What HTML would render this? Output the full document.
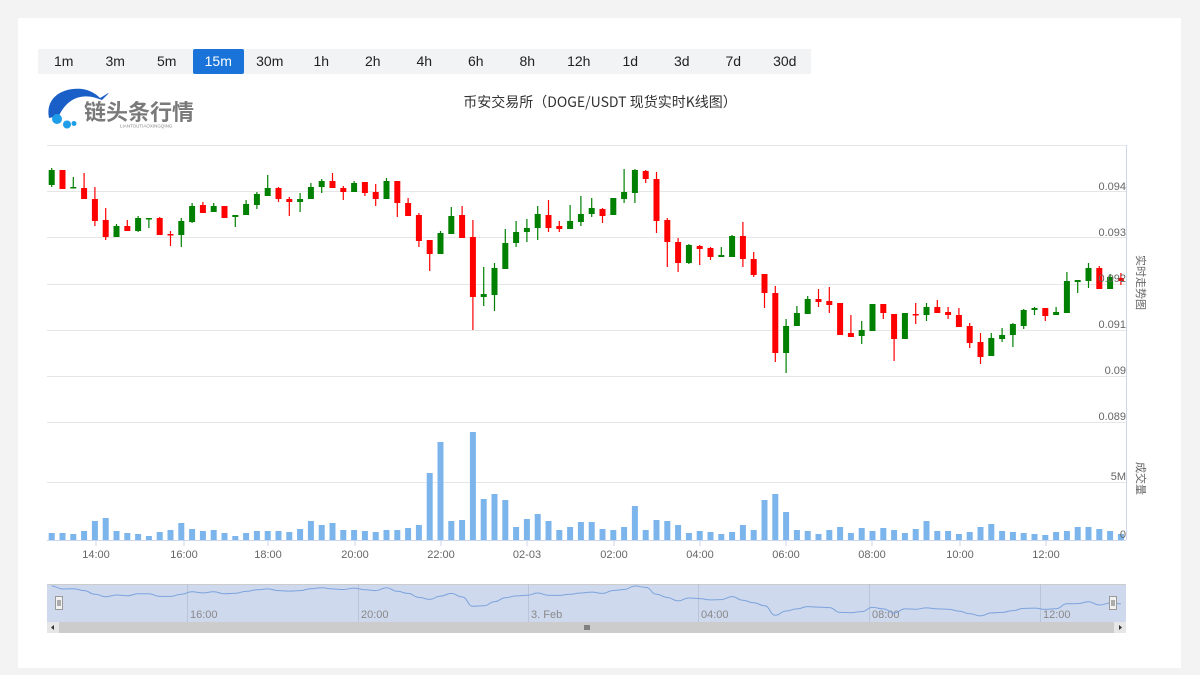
<!DOCTYPE html>
<html><head><meta charset="utf-8">
<style>
body{margin:0;width:1200px;height:675px;background:#f3f3f3;font-family:"Liberation Sans","Noto Sans CJK SC",sans-serif;overflow:hidden}
#card{position:absolute;left:18px;top:18px;width:1163px;height:650px;background:#fff}
.btns{position:absolute;left:38px;top:49px;height:25px;display:flex;background:#f2f3f5}
.btns div{width:51.5px;text-align:center;line-height:25px;font-size:14px;color:#222}
.btns .a{background:#1a73d9;color:#fff;border-radius:2px}
svg{position:absolute;left:0;top:0}
</style></head><body>
<div id="card"></div>
<div class="btns"><div>1m</div><div>3m</div><div>5m</div><div class="a">15m</div><div>30m</div><div>1h</div><div>2h</div><div>4h</div><div>6h</div><div>8h</div><div>12h</div><div>1d</div><div>3d</div><div>7d</div><div>30d</div></div>
<svg id="s" width="1200" height="675" xmlns="http://www.w3.org/2000/svg" font-family="Liberation Sans, Noto Sans CJK SC, sans-serif">
<path d="M49 118 C45 98 62 87 82 89 C90 90 96 94 100 98 C104 96 106 94 109 93 L102 100 L96 98 C80 93 66 100 59 116 Z" fill="#1a5fc8"/>
<circle cx="57" cy="119" r="5" fill="#1e9ee8"/><circle cx="67" cy="124.5" r="4" fill="#1e9ee8"/><circle cx="74" cy="123.5" r="2.5" fill="#1e9ee8"/>
<text x="84" y="120" font-size="22" font-weight="bold" fill="#7a7a7a" font-family="Noto Sans CJK SC, sans-serif">链头条行情</text>
<text x="120" y="127.5" font-size="4.5" fill="#888">LIANTOUTIAOXINGQING</text>
<text x="600" y="107" font-size="14" fill="#333" text-anchor="middle" font-family="Noto Sans CJK SC, sans-serif">币安交易所（DOGE/USDT 现货实时K线图）</text>
<g id="grid" stroke="#e6e6e6" stroke-width="1"></g>
<line x1="1126.5" y1="145" x2="1126.5" y2="540" stroke="#ccd6eb"/>
<line x1="47" y1="540.5" x2="1126" y2="540.5" stroke="#ccd6eb"/>
<g id="c"></g>
<g font-size="11" fill="#666" text-anchor="end">
<text x="1126" y="190">0.094</text><text x="1126" y="236">0.093</text><text x="1126" y="282">0.092</text><text x="1126" y="328">0.091</text><text x="1126" y="374">0.09</text><text x="1126" y="420">0.089</text><text x="1126" y="480">5M</text><text x="1126" y="538">0</text>
</g>
<g font-size="11" fill="#666" font-family="Noto Sans CJK SC, sans-serif">
<text transform="translate(1137,255) rotate(90)">实时走势图</text>
<text transform="translate(1137,462) rotate(90)">成交量</text>
</g>
<g id="t" font-size="11" fill="#666" text-anchor="middle"></g>
<rect x="47" y="584" width="1079" height="38" fill="#cfd9ee"/>
<line x1="47" y1="584.5" x2="1126" y2="584.5" stroke="#ccc"/>
<g id="nv" stroke="#bbc5da"></g>
<path id="nl" fill="none" stroke="#7ca3dc" stroke-width="1"/>
<rect x="47" y="622" width="1079" height="11" fill="#ccc"/>
<rect x="47" y="622" width="12" height="11" fill="#e6e6e6"/><rect x="1114" y="622" width="12" height="11" fill="#e6e6e6"/>
<path d="M51 627.5 L54 625 L54 630Z M1122 627.5 L1119 625 L1119 630Z" fill="#333"/>
<path d="M585 625v5M587 625v5M589 625v5" stroke="#333"/>
<rect x="55.5" y="596.5" width="7" height="13" fill="#f2f2f2" stroke="#999"/><rect x="1109.5" y="596.5" width="7" height="13" fill="#f2f2f2" stroke="#999"/>
<path d="M58 600v6M60 600v6M1112 600v6M1114 600v6" stroke="#666"/>
</svg>
<script>
var D=[[170,185,168,187,'g'],[170,189,170,189,'r'],[187,188,177,188,'g'],[188,199,173,199,'r'],[199,221,187,226,'r'],[220,237,208,240,'r'],[226,237,224,237,'g'],[226,231,220,231,'r'],[218,231,216,232,'g'],[218,219,218,228,'g'],[218,235,217,235,'r'],[234,235,231,246,'r'],[221,235,218,247,'g'],[206,222,203,223,'g'],[205,213,202,213,'r'],[206,212,203,212,'g'],[206,218,206,218,'r'],[215,217,215,227,'g'],[204,215,200,215,'g'],[194,205,192,209,'g'],[188,196,175,196,'g'],[188,199,187,202,'r'],[199,202,197,216,'r'],[199,202,193,212,'g'],[187,199,183,199,'g'],[181,187,179,193,'g'],[181,188,173,188,'r'],[188,192,186,200,'r'],[183,192,181,192,'g'],[182,193,182,196,'r'],[192,199,184,206,'r'],[181,199,178,199,'g'],[181,203,181,217,'r'],[203,216,198,216,'r'],[215,241,213,247,'r'],[240,254,240,271,'r'],[233,254,231,254,'g'],[216,234,207,234,'g'],[215,238,206,238,'r'],[237,297,220,330,'r'],[294,297,267,306,'g'],[268,295,263,311,'g'],[243,269,229,269,'g'],[232,243,221,247,'g'],[228,232,219,242,'g'],[214,228,206,240,'g'],[215,228,200,232,'r'],[226,229,221,232,'r'],[221,229,205,229,'g'],[214,222,196,226,'g'],[208,214,198,217,'g'],[209,216,208,223,'r'],[198,215,198,215,'g'],[192,199,169,203,'g'],[170,193,169,203,'g'],[171,179,170,183,'r'],[179,221,172,233,'r'],[220,242,218,267,'r'],[242,263,238,272,'r'],[245,263,244,264,'g'],[246,249,245,265,'r'],[248,257,247,260,'r'],[255,257,247,257,'g'],[236,257,235,257,'g'],[236,259,222,267,'r'],[259,275,252,277,'r'],[274,293,274,308,'r'],[293,353,286,362,'r'],[326,353,319,373,'g'],[313,326,306,326,'g'],[299,314,296,314,'g'],[299,302,289,307,'r'],[301,305,287,313,'r'],[303,335,303,335,'r'],[333,337,315,337,'r'],[330,336,321,344,'g'],[304,331,304,331,'g'],[304,313,304,319,'r'],[314,339,314,361,'r'],[313,339,313,339,'g'],[314,315,303,324,'r'],[307,315,303,321,'g'],[307,313,300,313,'r'],[312,315,307,319,'r'],[315,327,308,327,'r'],[326,343,323,348,'r'],[342,357,333,364,'r'],[338,356,333,356,'g'],[335,339,328,342,'g'],[324,335,323,347,'g'],[310,326,309,329,'g'],[308,310,307,315,'g'],[308,316,308,321,'r'],[312,315,307,315,'g'],[281,313,272,313,'g'],[280,282,280,293,'g'],[268,281,263,288,'g'],[268,289,266,289,'r'],[277,289,274,289,'g'],[278,281,273,285,'r']];
var V=[533,533,534,531,521,518,531,533,534,536,532,530,523,529,531,530,533,536,533,531,531,531,532,529,521,525,523,530,530,531,532,530,530,528,525,473,442,521,520,432,499,494,500,527,519,514,521,530,527,522,522,529,530,527,506,530,520,521,525,533,531,532,534,532,525,530,500,494,512,530,531,534,530,527,533,528,531,528,530,533,529,521,531,531,534,532,527,524,531,532,533,534,535,532,531,527,527,529,531,534];
var ns='http://www.w3.org/2000/svg';
function el(p,tag,a,txt){var e=document.createElementNS(ns,tag);for(var k in a)e.setAttribute(k,a[k]);if(txt)e.textContent=txt;p.appendChild(e);}
var g=document.getElementById('grid');
[145,191,237,284,330,376,422,482].forEach(function(y){el(g,'line',{x1:47,x2:1126,y1:y+.5,y2:y+.5});});
var c=document.getElementById('c');
D.forEach(function(d,i){var x=51.7+10.8*i,col=d[4]=='g'?'#008000':'#ff0000';
el(c,'line',{x1:x,x2:x,y1:d[2],y2:d[3],stroke:col,'stroke-width':1.2});
el(c,'rect',{x:x-3,y:d[0],width:6,height:Math.max(1.5,d[1]-d[0]),fill:col});
el(c,'rect',{x:x-3,y:V[i],width:6,height:540-V[i],fill:'#7cb5ec'});});
var t=document.getElementById('t');
[[96,'14:00'],[184,'16:00'],[268,'18:00'],[355,'20:00'],[441,'22:00'],[527,'02-03'],[614,'02:00'],[700,'04:00'],[786,'06:00'],[872,'08:00'],[960,'10:00'],[1046,'12:00']].forEach(function(a){el(t,'line',{x1:a[0],x2:a[0],y1:541,y2:546,stroke:'#ccd6eb'});el(t,'text',{x:a[0],y:558},a[1]);});
var nv=document.getElementById('nv');
[[187,'16:00'],[358,'20:00'],[528,'3. Feb'],[698,'04:00'],[869,'08:00'],[1040,'12:00']].forEach(function(a){el(nv,'line',{x1:a[0]+.5,x2:a[0]+.5,y1:584,y2:622});el(nv,'text',{x:a[0]+3,y:618,'font-size':11,fill:'#888',stroke:'none'},a[1]);});
var p='';var pts=D.map(function(d,i){var cl=d[4]=='g'?d[0]:d[1];return [51.7+10.8*i,586+(cl-170)*0.16];});
pts.forEach(function(q,i){if(i==0){p='M'+q[0]+' '+q[1].toFixed(1);return;}var pr=pts[i-1];var mx=(pr[0]+q[0])/2;p+=' C'+mx.toFixed(1)+' '+pr[1].toFixed(1)+' '+mx.toFixed(1)+' '+q[1].toFixed(1)+' '+q[0].toFixed(1)+' '+q[1].toFixed(1);});
document.getElementById('nl').setAttribute('d',p);
</script>
</body></html>
